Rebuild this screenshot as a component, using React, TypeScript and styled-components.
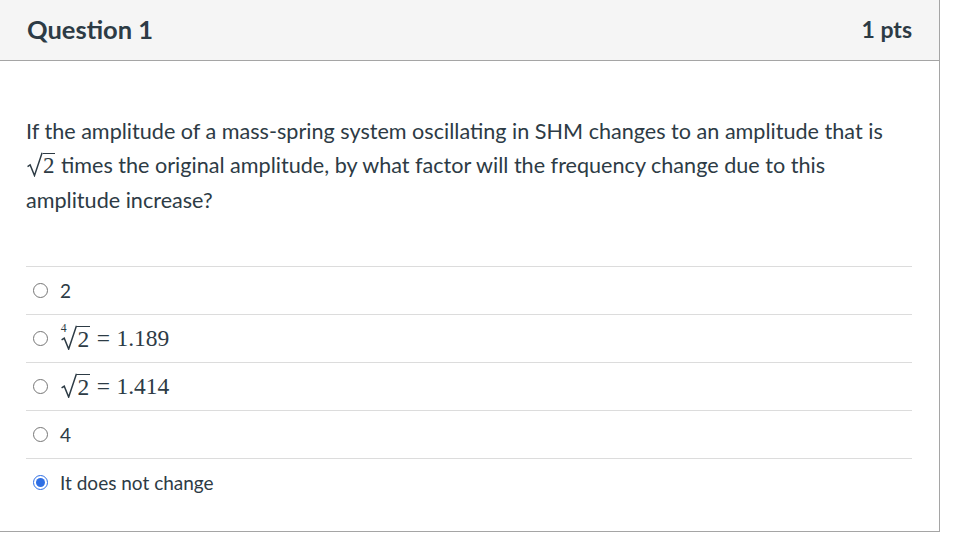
import React from "react";
import styled, { createGlobalStyle } from "styled-components";

const GlobalStyle = createGlobalStyle`
  html, body {
    margin: 0;
    padding: 0;
    background: #ffffff;
    overflow: hidden;
  }
  body {
    font-family: Lato, "Noto Sans", sans-serif;
    color: #2d3b45;
  }
`;

const Card = styled.div`
  box-sizing: border-box;
  width: 941px;
  margin: -1px 0 0 -1px;
  border: 1px solid #a5a5a5;
  background: #ffffff;
`;

const Header = styled.div`
  box-sizing: border-box;
  height: 61px;
  display: flex;
  align-items: center;
  justify-content: space-between;
  padding: 0 27px 2px 27px;
  background: #f5f5f5;
  border-bottom: 1px solid #a5a5a5;
`;

const Title = styled.h2`
  margin: 0;
  font-size: 25.5px;
  font-weight: 700;
  color: #2d3b45;
`;

const Points = styled.span`
  font-size: 23px;
  font-weight: 700;
  color: #2d3b45;
`;

const Body = styled.div`
  padding: 53px 27px 25px 26px;
`;

const Prompt = styled.p`
  margin: 0 0 49px 0;
  font-size: 21.6px;
  line-height: 34px;
`;

const Answers = styled.div`
  display: flex;
  flex-direction: column;
`;

const Answer = styled.label`
  box-sizing: border-box;
  height: 48px;
  display: flex;
  align-items: center;
  gap: 12px;
  padding-left: 7px;
  border-top: 1px solid #dcdcdc;
  font-size: 19px;
`;

const Radio = styled.input`
  margin: 0;
  width: 15px;
  height: 15px;
  accent-color: #2f6fe4;
`;

const Math = styled.span<{ $size?: number }>`
  font-family: "Liberation Serif", "DejaVu Serif", serif;
  font-size: ${(p) => p.$size ?? 23.5}px;
  white-space: nowrap;
`;

const Rel = styled.span`
  margin: 0 0.28em;
`;

const Radical = styled.span`
  display: inline-flex;
  align-items: flex-end;
  position: relative;
  vertical-align: -0.18em;
`;

const Index = styled.span`
  position: absolute;
  left: 0.06em;
  top: -0.14em;
  font-size: 0.5em;
  line-height: 1;
`;

const Sign = styled.svg`
  width: 0.72em;
  height: 1.08em;
  display: block;
`;

const Radicand = styled.span`
  border-top: 1.3px solid #2d3b45;
  line-height: 0.9;
  padding: 0.1em 0.04em 0 0.02em;
`;

const Sqrt = ({ index }: { index?: string }) => (
  <Radical>
    {index && <Index>{index}</Index>}
    <Sign viewBox="0 0 16 23" preserveAspectRatio="none">
      <path
        d="M1.5 13.5 L4 12 L8.2 21.8 L15.6 0.7"
        fill="none"
        stroke="#2d3b45"
        strokeWidth="1.4"
      />
    </Sign>
    <Radicand>2</Radicand>
  </Radical>
);

const answers: { key: string; content: React.ReactNode; checked?: boolean }[] = [
  { key: "a", content: "2" },
  {
    key: "b",
    content: (
      <Math>
        <Sqrt index="4" />
        <Rel>=</Rel>1.189
      </Math>
    ),
  },
  {
    key: "c",
    content: (
      <Math>
        <Sqrt />
        <Rel>=</Rel>1.414
      </Math>
    ),
  },
  { key: "d", content: "4" },
  { key: "e", content: "It does not change", checked: true },
];

const App = () => {
  return (
    <>
      <GlobalStyle />
      <Card>
        <Header>
          <Title>Question 1</Title>
          <Points>1 pts</Points>
        </Header>
        <Body>
          <Prompt>
            If the amplitude of a mass-spring system oscillating in SHM changes to an amplitude that is{" "}
            <Math $size={23}>
              <Sqrt />
            </Math>{" "}
            times the original amplitude, by what factor will the frequency change due to this
            amplitude increase?
          </Prompt>
          <Answers>
            {answers.map((a) => (
              <Answer key={a.key}>
                <Radio type="radio" name="q1" defaultChecked={a.checked} />
                <span>{a.content}</span>
              </Answer>
            ))}
          </Answers>
        </Body>
      </Card>
    </>
  );
};

export default App;
